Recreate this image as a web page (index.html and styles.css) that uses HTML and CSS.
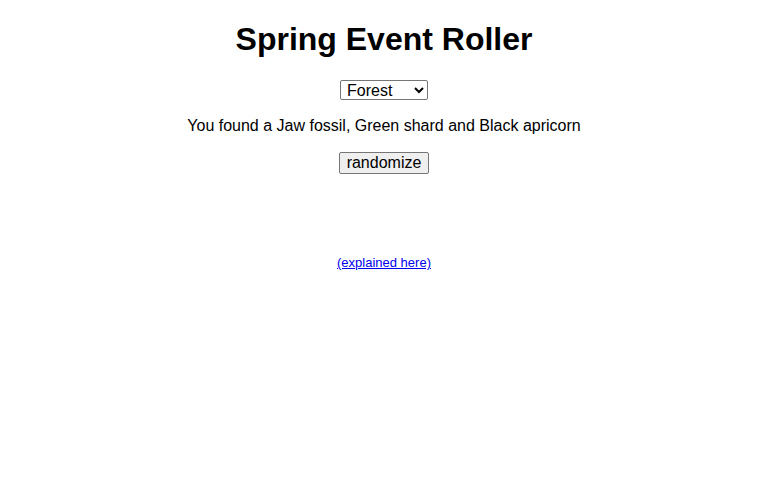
FILE: index.html
```html
<!DOCTYPE html>
<html>
<head>
<meta charset="utf-8">
<title>Spring Event Roller</title>
<link rel="stylesheet" href="styles.css">
</head>
<body>
<main class="roller">
  <h1 class="title">Spring Event Roller</h1>
  <p class="row">
    <select class="area">
      <option>Forest</option>
      <option>Beach</option>
      <option>Mountain</option>
      <option>Cave</option>
    </select>
  </p>
  <p class="result">You found a Jaw fossil, Green shard and Black apricorn</p>
  <p class="row">
    <button class="roll" type="button">randomize</button>
  </p>
  <p class="note"><a href="#">(explained here)</a></p>
</main>
</body>
</html>
```

FILE: styles.css
```css
body {
  margin: 8px;
  font-family: "Liberation Sans", Arial, sans-serif;
  color: #000;
  background: #fff;
}

.roller {
  text-align: center;
}

.title {
  font-size: 32px;
  font-weight: bold;
  margin: 13px 0 22px;
  line-height: 37px;
}

.row {
  margin: 16px 0;
  line-height: 18px;
}

.area {
  font-family: "Liberation Sans", Arial, sans-serif;
  font-size: 16px;
  width: 88px;
  height: 20px;
  padding: 0 0 0 2px;
  border: 1px solid #767676;
  border-radius: 2px;
  background: #fff;
  color: #000;
  vertical-align: top;
}

.result {
  font-size: 16px;
  line-height: 18px;
  margin: 17px 0;
}

.roll {
  font-family: "Liberation Sans", Arial, sans-serif;
  font-size: 16px;
  width: 90px;
  height: 22px;
  padding: 0 6px;
  border: 1px solid #767676;
  border-radius: 2px;
  background: #efefef;
  color: #000;
  vertical-align: top;
}

.note {
  margin: 81px 0 0;
  font-size: 13px;
  line-height: 15px;
}

.note a {
  color: #0000ee;
}
```
